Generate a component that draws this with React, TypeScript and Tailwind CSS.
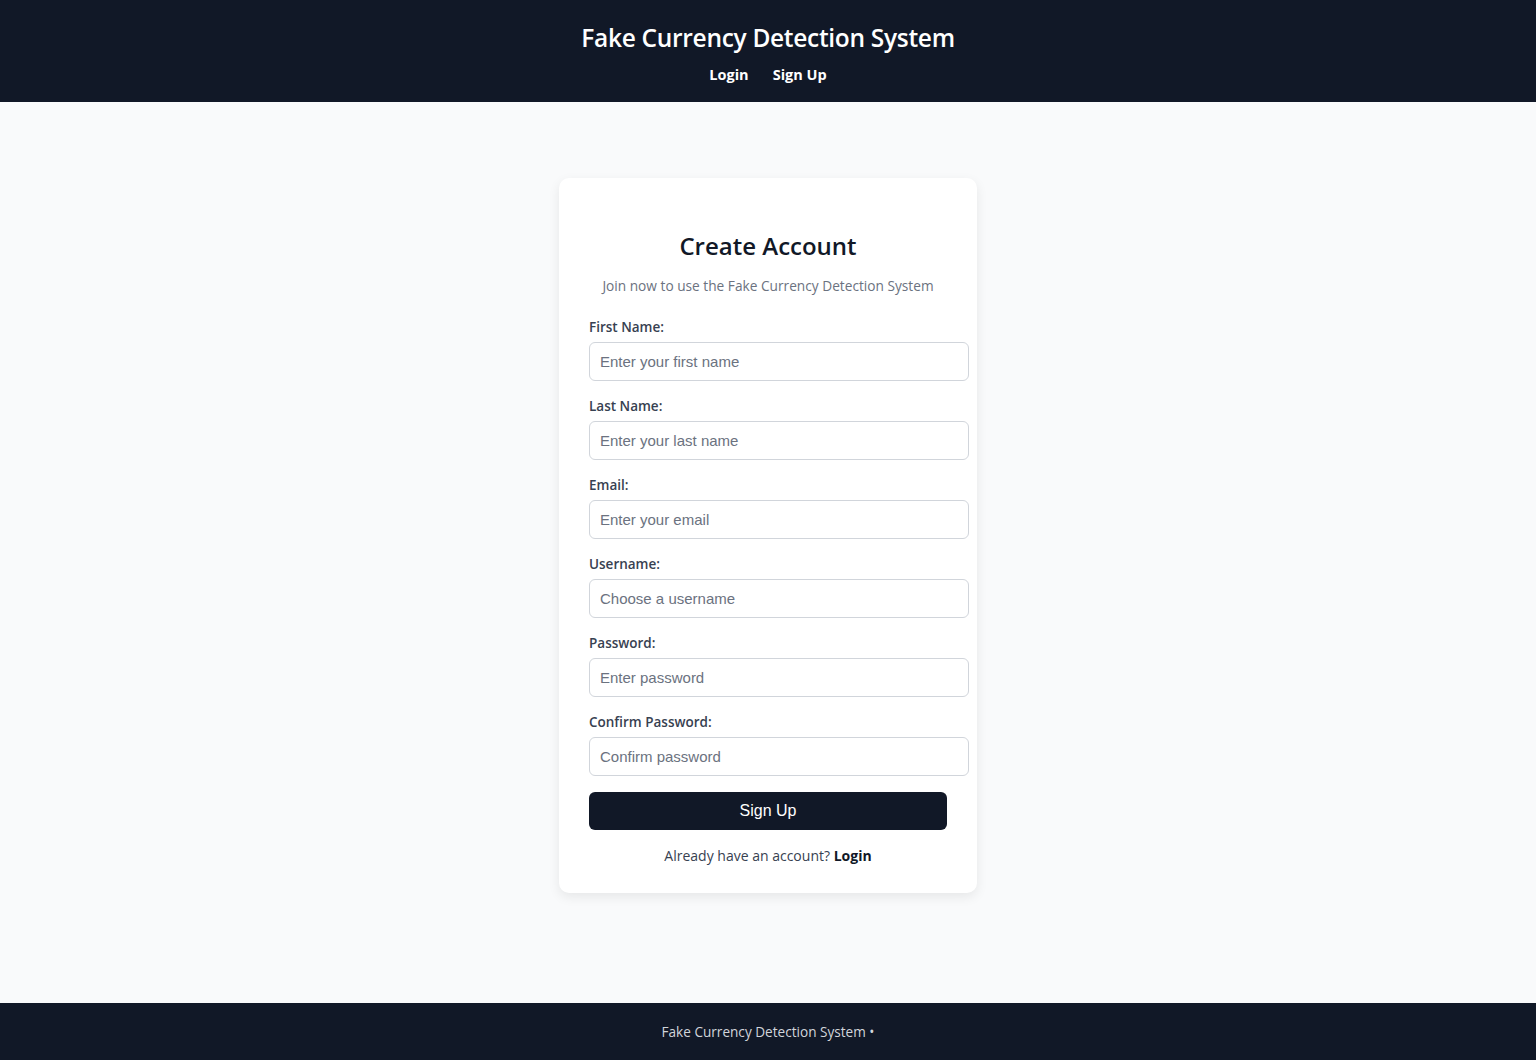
const fields = [
  { label: "First Name:", placeholder: "Enter your first name", type: "text" },
  { label: "Last Name:", placeholder: "Enter your last name", type: "text" },
  { label: "Email:", placeholder: "Enter your email", type: "email" },
  { label: "Username:", placeholder: "Choose a username", type: "text" },
  { label: "Password:", placeholder: "Enter password", type: "password" },
  { label: "Confirm Password:", placeholder: "Confirm password", type: "password" },
];

const sans = "font-['Open_Sans',sans-serif]";
const arial = "font-['Liberation_Sans',Arial,sans-serif]";

export default function App() {
  return (
    <div className={`flex min-h-[1060px] flex-col bg-[#f9fafb] ${sans}`}>
      <header className="flex h-[102px] flex-col items-center bg-[#111827] pt-[20px] text-white">
        <h1 className="text-[24.5px] font-semibold leading-[36px] tracking-[-0.3px]">
          Fake Currency Detection System
        </h1>
        <nav className="mt-[9px] flex gap-6 text-[14.5px] font-bold leading-[20px]">
          <a href="#">Login</a>
          <a href="#">Sign Up</a>
        </nav>
      </header>

      <main className="flex flex-1 justify-center pt-[76px]">
        <div className="h-[715px] w-[418px] rounded-[10px] bg-white px-[30px] pt-[50px] shadow-[0_4px_12px_rgba(0,0,0,0.08)]">
          <h2 className="text-center text-[24px] font-semibold leading-[36px] text-[#111827]">
            Create Account
          </h2>
          <p className="mt-[12px] text-center text-[13.7px] leading-[20px] text-[#6b7280]">
            Join now to use the Fake Currency Detection System
          </p>

          <form className="mt-[21px]" onSubmit={(e) => e.preventDefault()}>
            {fields.map((f) => (
              <div key={f.label} className="mb-[20px] h-[59px]">
                <label className="block text-[13.5px] font-semibold leading-[20px] text-[#374151]">
                  {f.label}
                </label>
                <input
                  type={f.type}
                  placeholder={f.placeholder}
                  className={`mt-[5px] box-border h-[39px] w-[380px] rounded-[6px] border border-[#d1d5db] bg-white px-[10px] text-[15px] text-[#111827] outline-none placeholder:text-[#6b7280] ${arial}`}
                />
              </div>
            ))}
            <button
              type="submit"
              className={`mt-[1px] h-[38px] w-[358px] rounded-[6px] bg-[#111827] text-[16px] text-white ${arial}`}
            >
              Sign Up
            </button>
          </form>

          <p className="mt-[16px] text-center text-[14px] leading-[20px] text-[#374151]">
            Already have an account?{" "}
            <a href="#" className="font-bold text-[#111827]">
              Login
            </a>
          </p>
        </div>
      </main>

      <footer className="flex h-[57px] items-center justify-center bg-[#111827] pt-[2px] text-[13.6px] text-[#d1d5db]">
        Fake Currency Detection System •
      </footer>
    </div>
  );
}
